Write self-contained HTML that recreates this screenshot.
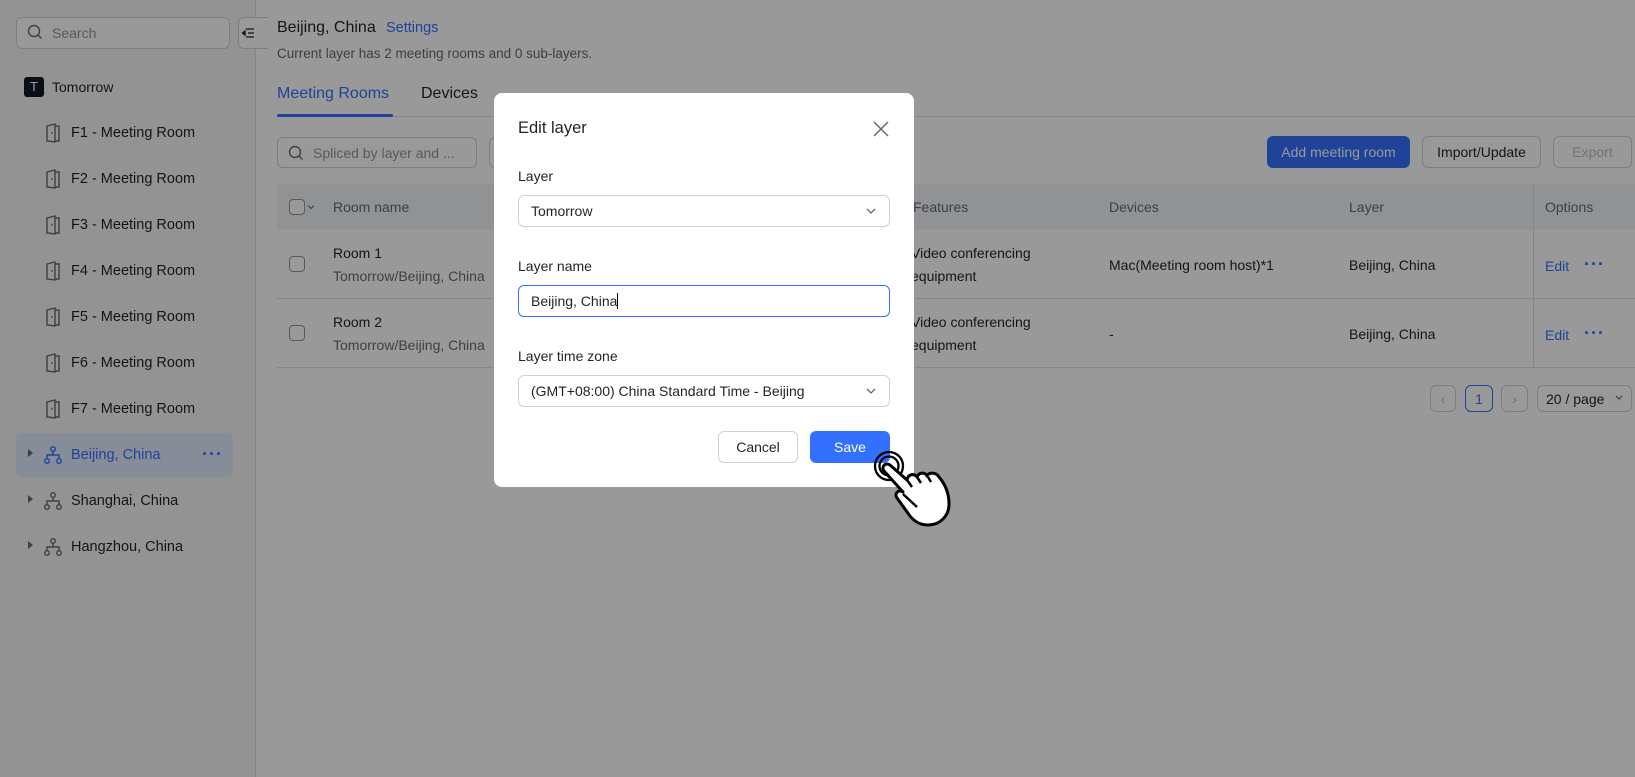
<!DOCTYPE html>
<html><head><meta charset="utf-8"><style>
*{box-sizing:border-box;margin:0;padding:0}
body{width:1635px;height:777px;position:relative;overflow:hidden;background:#fff;font-family:"Liberation Sans",sans-serif;color:#1f2329;font-size:14px}
.a{position:absolute;white-space:nowrap}
.sb{left:0;top:0;width:256px;height:777px;background:#f5f6f7;border-right:1px solid #dee0e3}
.box{border:1px solid #d0d3d6;border-radius:6px;background:#fff}
.ov{left:0;top:0;width:1635px;height:777px;background:rgba(0,0,0,0.4)}
.btn{display:flex;align-items:center;justify-content:center;border-radius:6px;font-size:14px}
.th{color:#646a73}
.cb{width:16px;height:16px;border:1px solid #8f959e;border-radius:4px;background:#fff}
.m{font-size:14px}
.dots{font-size:18px;font-weight:bold;letter-spacing:1px}
</style></head><body>
<div class="a sb"></div>
<div class="a box" style="left:16px;top:17px;width:214px;height:32px"></div>
<svg class="a" style="left:27px;top:24px" width="16" height="16" viewBox="0 0 16 16"><circle cx="7" cy="7" r="5.5" fill="none" stroke="#646a73" stroke-width="1.4"/><path d="M11 11l3.5 3.5" stroke="#646a73" stroke-width="1.4"/></svg>
<div class="a" style="left:52px;top:25px;color:#8f959e">Search</div>
<div class="a box" style="left:238px;top:17px;width:30px;height:32px;border-right:none;border-radius:6px 0 0 6px"></div>
<svg class="a" style="left:241px;top:26px" width="14" height="14" viewBox="0 0 14 14"><path d="M5 3h8M7 7h6M5 11h8M4 5L1.5 7 4 9z" stroke="#1f2329" stroke-width="1.3" fill="#1f2329"/></svg>
<div class="a" style="left:24px;top:77px;width:20px;height:20px;background:#111a27;border-radius:3px;color:#fff;font-size:13px;text-align:center;line-height:20px">T</div>
<div class="a" style="left:52px;top:79px">Tomorrow</div>
<div id="rooms"></div>
<div class="a" style="left:16px;top:433px;width:217px;height:44px;background:#e1eaff;border-radius:6px"></div>
<div class="a" style="left:28px;top:449px;width:0;height:0;border-left:5px solid #646a73;border-top:4px solid transparent;border-bottom:4px solid transparent"></div>
<div class="a" style="left:28px;top:495px;width:0;height:0;border-left:5px solid #646a73;border-top:4px solid transparent;border-bottom:4px solid transparent"></div>
<div class="a" style="left:28px;top:541px;width:0;height:0;border-left:5px solid #646a73;border-top:4px solid transparent;border-bottom:4px solid transparent"></div>
<svg class="a" style="left:43px;top:445px" width="20" height="20" viewBox="0 0 20 20"><g fill="none" stroke="#3370ff" stroke-width="1.4"><circle cx="10" cy="4" r="2.3"/><circle cx="4" cy="16" r="2.3"/><circle cx="16" cy="16" r="2.3"/><path d="M10 6.3V10M4 13.7V10h12v3.7"/></g></svg>
<div class="a" style="left:71px;top:447px;color:#3370ff;font-size:14.5px">Beijing, China</div>
<div class="a dots" style="left:202px;top:444px;color:#3370ff">···</div>
<svg class="a" style="left:43px;top:491px" width="20" height="20" viewBox="0 0 20 20"><g fill="none" stroke="#646a73" stroke-width="1.4"><circle cx="10" cy="4" r="2.3"/><circle cx="4" cy="16" r="2.3"/><circle cx="16" cy="16" r="2.3"/><path d="M10 6.3V10M4 13.7V10h12v3.7"/></g></svg>
<div class="a" style="left:71px;top:493px;font-size:14.5px">Shanghai, China</div>
<svg class="a" style="left:43px;top:537px" width="20" height="20" viewBox="0 0 20 20"><g fill="none" stroke="#646a73" stroke-width="1.4"><circle cx="10" cy="4" r="2.3"/><circle cx="4" cy="16" r="2.3"/><circle cx="16" cy="16" r="2.3"/><path d="M10 6.3V10M4 13.7V10h12v3.7"/></g></svg>
<div class="a" style="left:71px;top:539px;font-size:14.5px">Hangzhou, China</div>

<div class="a" style="left:277px;top:19px;font-size:16px">Beijing, China</div>
<div class="a" style="left:386px;top:20px;color:#3370ff;font-size:14.5px">Settings</div>
<div class="a" style="left:277px;top:46px;color:#646a73;font-size:13.5px">Current layer has 2 meeting rooms and 0 sub-layers.</div>
<div class="a" style="left:277px;top:85px;color:#3370ff;font-size:16px">Meeting Rooms</div>
<div class="a" style="left:421px;top:85px;font-size:16px">Devices</div>
<div class="a" style="left:277px;top:116px;width:1358px;height:1px;background:#dee0e3"></div>
<div class="a" style="left:277px;top:114px;width:116px;height:3px;background:#3370ff;border-radius:2px"></div>
<div class="a box" style="left:277px;top:137px;width:200px;height:31px"></div>
<svg class="a" style="left:288px;top:145px" width="16" height="16" viewBox="0 0 16 16"><circle cx="7" cy="7" r="5.5" fill="none" stroke="#646a73" stroke-width="1.4"/><path d="M11 11l3.5 3.5" stroke="#646a73" stroke-width="1.4"/></svg>
<div class="a" style="left:313px;top:145px;color:#8f959e">Spliced by layer and ...</div>
<div class="a box" style="left:489px;top:137px;width:40px;height:31px"></div>
<div class="a btn" style="left:1267px;top:136px;width:143px;height:32px;background:#3370ff;color:#fff">Add meeting room</div>
<div class="a btn box" style="left:1422px;top:136px;width:119px;height:32px">Import/Update</div>
<div class="a btn box" style="left:1553px;top:136px;width:79px;height:32px;color:#bbbfc4">Export</div>
<div class="a" style="left:277px;top:184px;width:1358px;height:46px;background:#f2f3f5"></div>
<div class="a cb" style="left:289px;top:199px"></div>
<svg class="a" style="left:307px;top:203px" width="8" height="8" viewBox="0 0 8 8"><path d="M1 2.5l3 3 3-3" fill="none" stroke="#646a73" stroke-width="1.1"/></svg>
<div class="a th" style="left:333px;top:199px">Room name</div>
<div class="a th" style="left:913px;top:199px">Features</div>
<div class="a th" style="left:1109px;top:199px">Devices</div>
<div class="a th" style="left:1349px;top:199px">Layer</div>
<div class="a" style="left:1533px;top:184px;width:1px;height:183px;background:#dee0e3"></div>
<div class="a th" style="left:1545px;top:199px">Options</div>
<div class="a" style="left:277px;top:298px;width:1358px;height:1px;background:#dee0e3"></div>
<div class="a" style="left:277px;top:367px;width:1358px;height:1px;background:#dee0e3"></div>
<div class="a cb" style="left:289px;top:256px"></div>
<div class="a" style="left:333px;top:245px">Room 1</div>
<div class="a" style="left:333px;top:268px;color:#646a73">Tomorrow/Beijing, China</div>
<div class="a" style="left:911px;top:245px">Video conferencing</div>
<div class="a" style="left:911px;top:268px">equipment</div>
<div class="a" style="left:1109px;top:257px">Mac(Meeting room host)*1</div>
<div class="a" style="left:1349px;top:257px">Beijing, China</div>
<div class="a" style="left:1545px;top:258px;color:#3370ff">Edit</div>
<div class="a dots" style="left:1584px;top:254px;color:#3370ff">···</div>
<div class="a cb" style="left:289px;top:325px"></div>
<div class="a" style="left:333px;top:314px">Room 2</div>
<div class="a" style="left:333px;top:337px;color:#646a73">Tomorrow/Beijing, China</div>
<div class="a" style="left:911px;top:314px">Video conferencing</div>
<div class="a" style="left:911px;top:337px">equipment</div>
<div class="a" style="left:1109px;top:326px">-</div>
<div class="a" style="left:1349px;top:326px">Beijing, China</div>
<div class="a" style="left:1545px;top:327px;color:#3370ff">Edit</div>
<div class="a dots" style="left:1584px;top:323px;color:#3370ff">···</div>
<div class="a btn box" style="left:1430px;top:385px;width:26px;height:27px;color:#bbb">‹</div>
<div class="a btn box" style="left:1465px;top:385px;width:28px;height:27px;border-color:#3370ff;color:#3370ff">1</div>
<div class="a btn box" style="left:1501px;top:385px;width:27px;height:27px;color:#bbb">›</div>
<div class="a btn box" style="left:1537px;top:385px;width:95px;height:27px;justify-content:flex-start;padding-left:8px">20 / page</div>
<svg class="a" style="left:1614px;top:394px" width="10" height="8" viewBox="0 0 10 8"><path d="M2 2l3 3 3-3" fill="none" stroke="#646a73" stroke-width="1.2"/></svg>

<div class="a ov"></div>

<div class="a" style="left:494px;top:93px;width:420px;height:394px;background:#fff;border-radius:8px"></div>
<div class="a" style="left:518px;top:119px;font-size:16.5px">Edit layer</div>
<svg class="a" style="left:872px;top:120px" width="18" height="18" viewBox="0 0 18 18"><path d="M2 2l14 14M16 2L2 16" stroke="#646a73" stroke-width="1.5"/></svg>
<div class="a m" style="left:518px;top:168px">Layer</div>
<div class="a box" style="left:518px;top:195px;width:372px;height:32px"></div>
<div class="a m" style="left:531px;top:203px">Tomorrow</div>
<svg class="a" style="left:865px;top:206px" width="12" height="10" viewBox="0 0 12 10"><path d="M2 3l4 4 4-4" fill="none" stroke="#646a73" stroke-width="1.3"/></svg>
<div class="a m" style="left:518px;top:258px">Layer name</div>
<div class="a" style="left:518px;top:285px;width:372px;height:32px;border:1px solid #3370ff;border-radius:6px"></div>
<div class="a m" style="left:531px;top:293px">Beijing, China<span style="display:inline-block;width:1px;height:16px;background:#000;vertical-align:-3px"></span></div>
<div class="a m" style="left:518px;top:348px">Layer time zone</div>
<div class="a box" style="left:518px;top:375px;width:372px;height:32px"></div>
<div class="a m" style="left:531px;top:383px">(GMT+08:00) China Standard Time - Beijing</div>
<svg class="a" style="left:865px;top:386px" width="12" height="10" viewBox="0 0 12 10"><path d="M2 3l4 4 4-4" fill="none" stroke="#646a73" stroke-width="1.3"/></svg>
<div class="a btn box" style="left:718px;top:431px;width:80px;height:32px">Cancel</div>
<div class="a btn" style="left:810px;top:431px;width:80px;height:32px;background:#3370ff;color:#fff">Save</div>

<svg class="a" style="left:870px;top:446px" width="110" height="90" viewBox="0 0 110 90">
<g fill="none" stroke="#000" stroke-width="2.3"><circle cx="19" cy="20" r="14"/><circle cx="19" cy="20" r="9.5"/></g>
<path d="M14 25c-3-4 1-9 6-6l17 15c1-6 7-7 10-3 2-5 8-5 10-1 2-4 9-4 12 1 6 7 10 16 10 27 0 12-9 21-21 21-8 0-14-4-18-9L27 52c-3-4 1-9 6-6L14 25z" fill="#fff" stroke="#000" stroke-width="3" stroke-linejoin="round"/>
<path d="M37 34l5 7M47 31l4 6M58 31l3 5M33 48l14 13" stroke="#000" stroke-width="2.5" fill="none"/>
</svg>

<script>
var h='';for(var i=1;i<=7;i++){var y=133+(i-1)*46;
h+='<svg class="a" style="left:44px;top:'+(y-10)+'px" width="18" height="20" viewBox="0 0 18 20"><g fill="none" stroke="#646a73" stroke-width="1.4"><path d="M3 3l8-2v18l-8-1z"/><path d="M11 3h4v15h-4"/></g><circle cx="8" cy="10" r="0.9" fill="#646a73"/></svg>';
h+='<div class="a" style="left:71px;top:'+(y-8)+'px;font-size:14.5px">F'+i+' - Meeting Room</div>';}
document.getElementById('rooms').outerHTML=h;
</script>
</body></html>
